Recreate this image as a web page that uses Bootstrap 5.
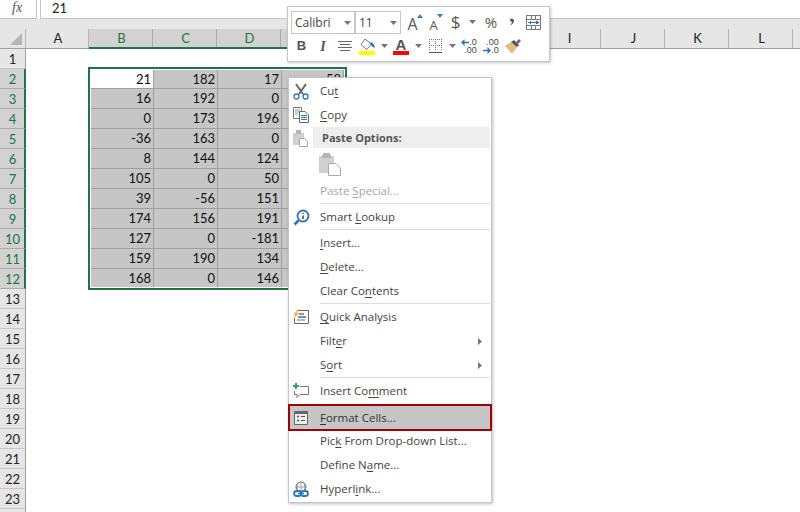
<!DOCTYPE html>
<html lang="en">
<head>
<meta charset="utf-8">
<title>Excel context menu</title>
<link href="https://cdn.jsdelivr.net/npm/bootstrap@5.3.0/dist/css/bootstrap.min.css" rel="stylesheet">
<style>
html,body{height:512px;overflow:hidden;background:#fff}
body{font-family:"Lato","Liberation Sans",sans-serif;font-size:13px;color:#111;position:relative;width:800px}
/* formula bar */
.fbar{height:19px;border-bottom:1px solid #c6c6c6}
.fxbox{width:37px;height:18px;border-right:1px solid #c6c6c6;padding:0 0 0 12px;font-family:"Liberation Serif",serif;font-style:italic;font-size:14px;line-height:15px;color:#555}
.fgap{width:3px;height:19px;background:#fff;margin-bottom:-1px}
.finput{border-left:1px solid #c6c6c6;height:18px;padding-left:11px;line-height:17px;font-size:13px;color:#222}
/* headers */
.headstrip{background:#e6e6e6;height:30px;border-bottom:1px solid #9f9f9f;padding-top:10px}
.corner{width:26px;height:19px;border-right:1px solid #b5b5b5;padding:1px 0 0 8px}
.colh{width:64px;height:19px;border-right:1px solid #b5b5b5;text-align:center;line-height:19px;color:#222;padding-left:2px}
.colA{width:63px}
.colsel{background:#d2d2d2;color:#217346;box-shadow:0 2px 0 0 #217346;height:18px;line-height:19px;border-right-color:#ababab}
.rowhead{width:26px;flex:none}
.rowh{height:20px;background:#e6e6e6;border-right:1px solid #9f9f9f;border-bottom:1px solid #c6c6c6;text-align:center;line-height:20px;color:#222}
.rowsel{background:#d2d2d2;color:#217346;border-right:2px solid #217346;border-bottom-color:#ababab;padding-left:1px}
/* selection */
.selwrap{margin:18px 0 0 62px;width:259px;height:223px;border:2px solid #217346;padding:1px;background:#fff;display:grid;grid-template-columns:63px 64px 64px 62px;grid-template-rows:19px repeat(9,20px) 18px}
.cellx{background:#c6c6c6;border-right:1px solid #9f9f9f;border-bottom:1px solid #9f9f9f;text-align:right;padding-right:2px;line-height:19px;color:#111}
.cellw{background:#fff}
.celllast{border-bottom:0}
/* mini toolbar */
.minibar{position:absolute;left:287px;top:6px;width:263px;height:56px;background:#fff;border:1px solid #c6c6c6;box-shadow:1px 1px 3px rgba(0,0,0,.22);padding:4px 3px;z-index:5;font-family:"Open Sans","Liberation Sans",sans-serif;color:#555}
.ddbox{height:23px;border:1px solid #c6c6c6;padding:0 3px;font-size:12px;line-height:20px;color:#444}
.ddfont{width:64px}
.ddsize{width:46px}
.slot{display:flex;align-items:center;justify-content:center;height:22px;flex:none}
.s12{width:12px}.s15{width:17px}.s20{width:20px}.s21{width:21px}.s22{width:22px}
.tbrow2{margin-top:1px;height:22px}
.growrow{align-items:flex-start}
.tbtri{margin:3px 0 0 -1px}
.glyphbig{font-size:16px;line-height:16px;color:#555;padding-top:5px}
.glyphmid{font-size:13px;line-height:13px;color:#555;padding-top:8px}
.glyphcur{font-size:17px;line-height:22px;color:#555}
.glyphpct{font-size:15px;line-height:22px;color:#555}
.bold14{font-family:"Liberation Sans",sans-serif;font-weight:700;font-size:13px;color:#555}
.fontA{font-size:15px;line-height:13px}
.ital14{font-family:"Liberation Serif",serif;font-style:italic;font-weight:700;font-size:14px;color:#555}
.decs{font-family:"Liberation Sans",sans-serif;font-size:9px;line-height:8px;color:#444;text-align:right}
/* context menu */
.ctxmenu{display:block;position:absolute;left:288px;top:77px;width:204px;height:426px;min-width:0;background:#fff;border:1px solid #c6c6c6;border-radius:0;box-shadow:1px 1px 3px rgba(0,0,0,.25);padding:1px 0 0;margin:0;z-index:6;font-family:"Open Sans","Liberation Sans",sans-serif;font-size:11.5px;color:#444}
.ctxmenu .dropdown-item{display:flex;align-items:center;height:24px;padding:0;color:#444;background:transparent;font-size:11.5px;line-height:24px}
.mi-icon{width:31px;flex:none;display:flex;align-items:center;height:24px;padding-left:4px}
.mi-arrow{margin-left:auto;margin-right:9px}
.mi-off.dropdown-item{color:#a6a6a6}
.mi-div.dropdown-divider{margin:0 1px 1px 31px;height:1px;border-top:1px solid #dcdcdc;opacity:1}
.mi-head{height:22px;display:flex}
.mi-headtxt{margin:0 1px 1px 0;flex:1;background:#eee;font-weight:700;color:#555;font-size:11px;line-height:21px;padding-left:9px}
.mi-headicon{width:24px;display:flex;align-items:center;padding-left:4px}
.mi-paste{height:30px;padding-left:30px;display:flex;align-items:center}
.ctxmenu .mi-format.dropdown-item{height:27px;background:#c6c6c6;border:2px solid #9c0006;margin:1px -1px -2px -1px;width:204px;position:relative;color:#333}
.mi-format .mi-icon{width:30px}
u{text-underline-offset:2px;text-decoration-thickness:1px}
</style>
</head>
<body>
<div class="fbar d-flex">
  <div class="fxbox">fx</div>
  <div class="fgap"></div>
  <div class="finput flex-grow-1">21</div>
</div>
<div class="headstrip d-flex">
  <div class="corner"><svg class="d-block" width="16" height="16" viewBox="0 0 16 16"><path d="M2 15 L14 15 L14 3 Z" fill="#b5b5b5"/></svg></div>
  <div class="colh colA">A</div>
  <div class="colh colsel">B</div>
  <div class="colh colsel">C</div>
  <div class="colh colsel">D</div>
  <div class="colh colsel">E</div>
  <div class="colh">F</div>
  <div class="colh">G</div>
  <div class="colh">H</div>
  <div class="colh">I</div>
  <div class="colh">J</div>
  <div class="colh">K</div>
  <div class="colh">L</div>
</div>
<div class="d-flex">
  <div class="rowhead">
    <div class="rowh">1</div>
    <div class="rowh rowsel">2</div><div class="rowh rowsel">3</div><div class="rowh rowsel">4</div><div class="rowh rowsel">5</div>
    <div class="rowh rowsel">6</div><div class="rowh rowsel">7</div><div class="rowh rowsel">8</div><div class="rowh rowsel">9</div>
    <div class="rowh rowsel">10</div><div class="rowh rowsel">11</div><div class="rowh rowsel">12</div>
    <div class="rowh">13</div><div class="rowh">14</div><div class="rowh">15</div><div class="rowh">16</div><div class="rowh">17</div>
    <div class="rowh">18</div><div class="rowh">19</div><div class="rowh">20</div><div class="rowh">21</div><div class="rowh">22</div><div class="rowh">23</div>
    <div class="rowh"></div>
  </div>
  <div class="selwrap">
    <div class="cellx cellw">21</div><div class="cellx">182</div><div class="cellx">17</div><div class="cellx">58</div>
    <div class="cellx">16</div><div class="cellx">192</div><div class="cellx">0</div><div class="cellx"></div>
    <div class="cellx">0</div><div class="cellx">173</div><div class="cellx">196</div><div class="cellx"></div>
    <div class="cellx">-36</div><div class="cellx">163</div><div class="cellx">0</div><div class="cellx"></div>
    <div class="cellx">8</div><div class="cellx">144</div><div class="cellx">124</div><div class="cellx"></div>
    <div class="cellx">105</div><div class="cellx">0</div><div class="cellx">50</div><div class="cellx"></div>
    <div class="cellx">39</div><div class="cellx">-56</div><div class="cellx">151</div><div class="cellx"></div>
    <div class="cellx">174</div><div class="cellx">156</div><div class="cellx">191</div><div class="cellx"></div>
    <div class="cellx">127</div><div class="cellx">0</div><div class="cellx">-181</div><div class="cellx"></div>
    <div class="cellx">159</div><div class="cellx">190</div><div class="cellx">134</div><div class="cellx"></div>
    <div class="cellx celllast">168</div><div class="cellx celllast">0</div><div class="cellx celllast">146</div><div class="cellx celllast"></div>
  </div>
</div>

<!-- mini toolbar -->
<div class="minibar">
  <div class="d-flex">
    <div class="ddbox ddfont d-flex justify-content-between align-items-center">Calibri<svg width="7" height="4" viewBox="0 0 7 4"><path d="M0 0H7L3.5 4Z" fill="#777"/></svg></div>
    <div class="ddbox ddsize d-flex justify-content-between align-items-center">11<svg width="7" height="4" viewBox="0 0 7 4"><path d="M0 0H7L3.5 4Z" fill="#777"/></svg></div>
    <div class="slot s20 ms-1 growrow"><span class="glyphbig">A</span><svg class="tbtri" width="6" height="4" viewBox="0 0 6 4"><path d="M0 4H6L3 0Z" fill="#3f7fb5"/></svg></div>
    <div class="slot s22 growrow"><span class="glyphmid">A</span><svg class="tbtri" width="6" height="4" viewBox="0 0 6 4"><path d="M0 0H6L3 4Z" fill="#3f7fb5"/></svg></div>
    <div class="slot s15 glyphcur">$</div>
    <div class="slot s15"><svg width="7" height="4" viewBox="0 0 7 4"><path d="M0 0H7L3.5 4Z" fill="#777"/></svg></div>
    <div class="slot s20 glyphpct">%</div>
    <div class="slot s21"><svg width="6" height="8" viewBox="0 0 6 8"><path d="M1 1.500C1 .5 5 .2 5 2.500 5 5 3 6.500 1.500 7.500 2.500 5.500 3 4.500 3 3.800 1.500 3.800 1 2.800 1 1.500Z" fill="#555"/></svg></div>
    <div class="slot s22"><svg width="15" height="15" viewBox="0 0 15 15" fill="none" shape-rendering="crispEdges"><path d="M.5.5H14.500V14.500H.5ZM.5 4.500H14.500M.5 10.500H14.500M5.500.5V4.500M9.500 .5V4.500M5.500 10.500V14.500M9.500 10.500V14.500" stroke="#7a7a7a"/><path d="M3 7.500H12" stroke="#2f75b5"/><path d="M2 7.500L5 5.500V9.500ZM13 7.500L10 5.500V9.500Z" fill="#2f75b5"/></svg></div>
  </div>
  <div class="d-flex tbrow2">
    <div class="slot s21 bold14">B</div>
    <div class="slot s22 ital14">I</div>
    <div class="slot s22"><svg width="14" height="11" viewBox="0 0 14 11"><path d="M0 .5H14M2 3.500H12M0 6.500H14M2 9.500H12" stroke="#666"/></svg></div>
    <div class="slot s22"><svg width="16" height="17" viewBox="0 0 16 17" fill="none"><path d="M6 1 2 6.500 7.500 11.500 12.500 6 6 1Z" stroke="#777"/><path d="M11 5C13 3.500 15 5.500 16 9.500 14 10 12 8 11 5Z" fill="#2f75b5"/><rect x="0" y="13" width="16" height="4" fill="#ffff00"/></svg></div>
    <div class="slot s12"><svg width="7" height="4" viewBox="0 0 7 4"><path d="M0 0H7L3.500 4Z" fill="#777"/></svg></div>
    <div class="slot s22 flex-column"><span class="bold14 fontA">A</span><svg class="d-block" width="16" height="4" viewBox="0 0 16 4"><rect width="16" height="4" fill="#ff0000"/></svg></div>
    <div class="slot s12"><svg width="7" height="4" viewBox="0 0 7 4"><path d="M0 0H7L3.500 4Z" fill="#777"/></svg></div>
    <div class="slot s22"><svg width="13" height="14" viewBox="0 0 13 14" fill="none" shape-rendering="crispEdges"><path d="M.5 0V12M6.500 0V12M12.500 0V12M0 .5H13M0 6.500H13" stroke="#777" stroke-dasharray="1 1"/><path d="M0 13.500H13" stroke="#555"/></svg></div>
    <div class="slot s12"><svg width="7" height="4" viewBox="0 0 7 4"><path d="M0 0H7L3.500 4Z" fill="#777"/></svg></div>
    <div class="slot s22">
      <div class="decs"><svg width="8" height="7" viewBox="0 0 8 7"><path d="M8 3.500H2" stroke="#2f75b5" stroke-width="1.500"/><path d="M0 3.500 3.500 0V7Z" fill="#2f75b5"/></svg>.0<br>.00</div>
    </div>
    <div class="slot s22">
      <div class="decs">.00<br><svg width="8" height="7" viewBox="0 0 8 7"><path d="M0 3.500H6" stroke="#2f75b5" stroke-width="1.500"/><path d="M8 3.500 4.500 0V7Z" fill="#2f75b5"/></svg>.0</div>
    </div>
    <div class="slot s22"><svg width="17" height="16" viewBox="0 0 17 16"><path d="M6 4 0 8 7 16 12 9Z" fill="#e3bd7e"/><path d="M6 4 9 2 14 7 12 9Z" fill="#555"/><path d="M11 4 14 1 16 3 13 6Z" fill="#6b6b6b"/></svg></div>
  </div>
</div>

<!-- context menu -->
<ul class="dropdown-menu ctxmenu list-unstyled">
  <li><a class="dropdown-item"><span class="mi-icon"><svg width="16" height="17" viewBox="0 0 16 17" fill="none"><path d="M3 1 10 11M13 1 6 11" stroke="#666" stroke-width="2"/><circle cx="3.500" cy="13.500" r="2.500" stroke="#2f75b5" stroke-width="1.300"/><circle cx="12.500" cy="13.500" r="2.500" stroke="#2f75b5" stroke-width="1.300"/></svg></span><span>Cu<u>t</u></span></a></li>
  <li><a class="dropdown-item"><span class="mi-icon"><svg width="16" height="16" viewBox="0 0 16 16" fill="none"><path d="M.5.5H8.500V11.500H.5Z" stroke="#777" fill="#fff"/><path d="M2 3H7M2 5H7M2 7H5" stroke="#999"/><path d="M6.500 4.500H12L15.500 8V15.500H6.500Z" stroke="#666" fill="#fff"/><path d="M8 8.500H14M8 10.500H14M8 12.500H14" stroke="#2f75b5"/></svg></span><span><u>C</u>opy</span></a></li>
  <li class="mi-head"><span class="mi-headicon"><svg width="15" height="17" viewBox="0 0 15 17"><path d="M0 3H11V15H0Z" fill="#d3cfd0"/><path d="M3 2H8V0H3ZM3 2H8V4H3Z" fill="#b8b4b5"/><path d="M6.500 8.500H11.500L14.500 11.500V16.500H6.500Z" fill="#fff" stroke="#aaa"/></svg></span><span class="mi-headtxt">Paste Options:</span></li>
  <li class="mi-paste"><svg width="22" height="24" viewBox="0 0 22 24"><path d="M0 4H15V21H0Z" fill="#d3cfd0"/><path d="M4 3H11V1H4ZM3 3H12V6H3Z" fill="#b8b4b5"/><path d="M9.500 11.500H17L21.500 16V23.500H9.500Z" fill="#fff" stroke="#aaa"/></svg></li>
  <li><a class="dropdown-item mi-off"><span class="mi-icon"></span><span>Paste <u>S</u>pecial...</span></a></li>
  <li><hr class="dropdown-divider mi-div"></li>
  <li><a class="dropdown-item"><span class="mi-icon"><svg width="17" height="17" viewBox="0 0 17 17" fill="none"><circle cx="10" cy="7" r="5.500" stroke="#2f75b5" stroke-width="1.800"/><path d="M5.500 11.500 1.500 15.500" stroke="#2f75b5" stroke-width="2.600"/><path d="M10 4V5M10 6.500V10" stroke="#444" stroke-width="1.500"/></svg></span><span>Smart <u>L</u>ookup</span></a></li>
  <li><hr class="dropdown-divider mi-div"></li>
  <li><a class="dropdown-item"><span class="mi-icon"></span><span><u>I</u>nsert...</span></a></li>
  <li><a class="dropdown-item"><span class="mi-icon"></span><span><u>D</u>elete...</span></a></li>
  <li><a class="dropdown-item"><span class="mi-icon"></span><span>Clear Co<u>n</u>tents</span></a></li>
  <li><hr class="dropdown-divider mi-div"></li>
  <li><a class="dropdown-item"><span class="mi-icon"><svg width="16" height="16" viewBox="0 0 16 16" fill="none"><path d="M5 1.500H15.500V14.500H1.500V9" stroke="#666"/><path d="M6 5H11" stroke="#c0504d" stroke-width="1.500"/><path d="M5 8H13" stroke="#2f75b5" stroke-width="1.500"/><path d="M4 11H12" stroke="#7fb58f" stroke-width="1.500"/><path d="M5 0 0 6H2L1 10 6 4H4L6 0Z" fill="#f0b860"/></svg></span><span><u>Q</u>uick Analysis</span></a></li>
  <li><a class="dropdown-item"><span class="mi-icon"></span><span>Filt<u>e</u>r</span><svg class="mi-arrow" width="4" height="7" viewBox="0 0 4 7"><path d="M0 0 4 3.500 0 7Z" fill="#777"/></svg></a></li>
  <li><a class="dropdown-item"><span class="mi-icon"></span><span>S<u>o</u>rt</span><svg class="mi-arrow" width="4" height="7" viewBox="0 0 4 7"><path d="M0 0 4 3.500 0 7Z" fill="#777"/></svg></a></li>
  <li><hr class="dropdown-divider mi-div"></li>
  <li><a class="dropdown-item"><span class="mi-icon"><svg width="16" height="16" viewBox="0 0 16 16" fill="none"><path d="M7 3.500H15.500V11.500H7L4 14.500V11.500H1.500V8" stroke="#777"/><path d="M3 0V6M0 3H6" stroke="#3f9a78" stroke-width="2"/></svg></span><span>Insert Co<u>m</u>ment</span></a></li>
  <li><a class="dropdown-item mi-format"><span class="mi-icon"><svg width="14" height="14" viewBox="0 0 14 14" fill="none"><path d="M.5.5H13.500V13.500H.5Z" stroke="#666" fill="#eee"/><path d="M1 2H13" stroke="#666" stroke-width="2"/><path d="M3 5.500H5M3 9.500H5" stroke="#555" stroke-width="1.500"/><path d="M7 5.500H11M7 9.500H11" stroke="#555"/></svg></span><span><u>F</u>ormat Cells...</span></a></li>
  <li><a class="dropdown-item"><span class="mi-icon"></span><span>Pic<u>k</u> From Drop-down List...</span></a></li>
  <li><a class="dropdown-item"><span class="mi-icon"></span><span>Define N<u>a</u>me...</span></a></li>
  <li><a class="dropdown-item"><span class="mi-icon"><svg width="16" height="16" viewBox="0 0 16 16" fill="none"><circle cx="8" cy="6" r="5" stroke="#666"/><path d="M3 6H13M8 1V11M5 2C4 5 4 8 5 10M11 2C12 5 12 8 11 10" stroke="#888" stroke-width=".8"/><rect x="1" y="10" width="7" height="5" rx="2.500" stroke="#2f75b5" stroke-width="1.800" fill="#fff"/><rect x="8" y="10" width="7" height="5" rx="2.500" stroke="#2f75b5" stroke-width="1.800" fill="#fff"/><path d="M5 12.500H11" stroke="#2f75b5" stroke-width="1.500"/></svg></span><span>Hyperl<u>i</u>nk...</span></a></li>
</ul>
<script src="https://cdn.jsdelivr.net/npm/bootstrap@5.3.0/dist/js/bootstrap.bundle.min.js"></script>
</body>
</html>
